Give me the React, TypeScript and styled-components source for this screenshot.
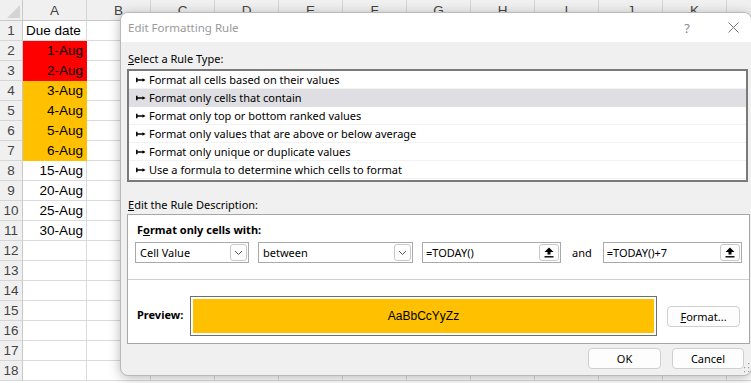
import React from "react";
import styled, { createGlobalStyle } from "styled-components";

const GlobalStyle = createGlobalStyle`
  html, body {
    margin: 0;
    padding: 0;
    width: 751px;
    height: 383px;
    overflow: hidden;
    background: #ffffff;
  }
`;

const UI_FONT = `"Noto Sans", "Open Sans", sans-serif`;
const CELL_FONT = `"Liberation Sans", Arial, sans-serif`;

const Page = styled.div`
  position: relative;
  width: 751px;
  height: 383px;
  overflow: hidden;
`;

/* ---------- spreadsheet ---------- */

const Sheet = styled.div`
  display: grid;
  grid-template-columns: 23px repeat(12, 64px);
  grid-template-rows: 21px repeat(18, 20px);
  font-family: ${CELL_FONT};
`;

const Corner = styled.div`
  position: relative;
  background: #f0f0f0;
  border-right: 1px solid #c8c8c8;
  border-bottom: 1px solid #c8c8c8;
  box-sizing: border-box;
  &::after {
    content: "";
    position: absolute;
    right: 2px;
    bottom: 2px;
    width: 0;
    height: 0;
    border-left: 13px solid transparent;
    border-bottom: 13px solid #d4d4d4;
  }
`;

const ColHead = styled.div`
  background: #f0f0f0;
  border-right: 1px solid #d6d6d6;
  border-bottom: 1px solid #c8c8c8;
  box-sizing: border-box;
  display: flex;
  align-items: center;
  justify-content: center;
  font-size: 13.5px;
  color: #444;
`;

const RowHead = styled.div`
  background: #f0f0f0;
  border-right: 1px solid #c8c8c8;
  border-bottom: 1px solid #d6d6d6;
  box-sizing: border-box;
  display: flex;
  align-items: center;
  justify-content: center;
  font-size: 13.5px;
  color: #444;
`;

const Cell = styled.div<{ $fill?: string; $right?: boolean }>`
  background: ${(p) => p.$fill || "#ffffff"};
  border-right: 1px solid ${(p) => p.$fill || "#dadada"};
  border-bottom: 1px solid ${(p) => p.$fill || "#dadada"};
  box-sizing: border-box;
  display: flex;
  align-items: center;
  justify-content: ${(p) => (p.$right ? "flex-end" : "flex-start")};
  padding: 0 3px;
  font-size: 13.5px;
  color: #000;
  white-space: nowrap;
`;

/* ---------- dialog ---------- */

const Dialog = styled.div`
  position: absolute;
  left: 120px;
  top: 12px;
  width: 632px;
  height: 364px;
  box-sizing: border-box;
  border: 1px solid #b9b9b9;
  border-radius: 8px;
  background: #f0f0f0;
  box-shadow: 0 2px 12px rgba(0, 0, 0, 0.28);
  overflow: hidden;
  display: flex;
  flex-direction: column;
  font-family: ${UI_FONT};
  font-size: 11px;
  color: #000;
`;

const TitleBar = styled.div`
  height: 29px;
  flex: none;
  background: #ffffff;
  display: flex;
  align-items: center;
  padding-left: 7px;
`;

const Title = styled.div`
  flex: 1;
  color: #9a9a9a;
  font-size: 11.5px;
`;

const TitleButton = styled.div<{ $gap?: number }>`
  width: 36px;
  height: 29px;
  margin-right: ${(p) => p.$gap || 0}px;
  display: flex;
  align-items: center;
  justify-content: center;
  color: #8a8a8a;
  font-size: 13px;
`;

const Body = styled.div`
  flex: 1;
  display: flex;
  flex-direction: column;
  padding-left: 6px;
`;

const SectionLabel = styled.div<{ $top: number }>`
  margin-top: ${(p) => p.$top}px;
  height: 16px;
  line-height: 16px;
  padding-left: 1px;
`;

const RuleList = styled.div`
  margin-top: 2px;
  width: 621px;
  height: 113px;
  box-sizing: border-box;
  border: 2px solid #7a7a7a;
  background: #ffffff;
  display: flex;
  flex-direction: column;
`;

const RuleItem = styled.div<{ $selected?: boolean }>`
  height: 18px;
  flex: none;
  box-sizing: border-box;
  display: flex;
  align-items: center;
  gap: 3px;
  padding-left: 7px;
  background: ${(p) => (p.$selected ? "#dedee3" : "#ffffff")};
  border-bottom: 1px solid ${(p) => (p.$selected ? "#dedee3" : "#f2f2f2")};
  white-space: nowrap;
`;

const RuleBox = styled.div`
  margin-top: 1px;
  width: 623px;
  height: 130px;
  box-sizing: border-box;
  border: 1px solid #a6a6a6;
  background: #ffffff;
  display: flex;
  flex-direction: column;
`;

const BoldLabel = styled.div`
  font-weight: 700;
  white-space: nowrap;
`;

const CriteriaHead = styled(BoldLabel)`
  margin: 7px 0 0 9px;
  height: 16px;
  line-height: 16px;
`;

const CriteriaRow = styled.div`
  margin: 4px 0 0 7px;
  height: 21px;
  display: flex;
  align-items: center;
`;

const Select = styled.div<{ $w: number }>`
  width: ${(p) => p.$w}px;
  height: 21px;
  box-sizing: border-box;
  border: 1px solid #a9a9a9;
  background: #ffffff;
  display: flex;
  align-items: center;
  justify-content: space-between;
  padding: 0 1px 0 4px;
  margin-right: 9px;
`;

const TextInput = styled(Select)`
  padding-left: 3px;
  margin-right: 0;
`;

const SmallBtn = styled.div<{ $w: number }>`
  width: ${(p) => p.$w}px;
  height: 17px;
  box-sizing: border-box;
  border: 1px solid #c9c9c9;
  border-radius: 3px;
  background: #fdfdfd;
  display: flex;
  align-items: center;
  justify-content: center;
`;

const AndLabel = styled.div`
  margin: 0 11px;
`;

const Divider = styled.div`
  margin-top: 16px;
  height: 1px;
  background: #d0d0d0;
`;

const PreviewRow = styled.div`
  margin-top: 16px;
  display: flex;
  align-items: center;
  padding-left: 9px;
`;

const PreviewLabel = styled(BoldLabel)`
  width: 53px;
  margin-top: -3px;
`;

const PreviewFrame = styled.div`
  width: 467px;
  height: 40px;
  box-sizing: border-box;
  border: 1px solid #6e6e6e;
  padding: 2px;
  background: #ffffff;
`;

const PreviewFill = styled.div`
  height: 100%;
  background: #ffc000;
  display: flex;
  align-items: center;
  justify-content: center;
  font-family: ${CELL_FONT};
  font-size: 12px;
  color: #000;
`;

const Button = styled.div<{ $w: number; $gap?: number }>`
  width: ${(p) => p.$w}px;
  height: 21px;
  margin-left: ${(p) => p.$gap || 0}px;
  box-sizing: border-box;
  border: 1px solid #cfcfcf;
  border-radius: 4px;
  background: #fdfdfd;
  display: flex;
  align-items: center;
  justify-content: center;
`;

const Footer = styled.div`
  margin-top: 4px;
  display: flex;
  justify-content: flex-end;
  padding-right: 7px;
`;

const Grip = styled.svg`
  position: absolute;
  right: 1px;
  bottom: 2px;
`;

/* ---------- icons ---------- */

const RuleArrow = () => (
  <svg width="10" height="8" viewBox="0 0 10 8">
    <path d="M0.8 1.8 V6.2" stroke="#000" strokeWidth="1.5" />
    <path d="M1 4 H7.5" stroke="#000" strokeWidth="1.6" />
    <path d="M6.5 2.2 L9.6 4 L6.5 5.8 Z" fill="#000" />
  </svg>
);

const Chevron = () => (
  <svg width="9" height="6" viewBox="0 0 9 6">
    <path d="M1 1 L4.5 4.5 L8 1" fill="none" stroke="#555" strokeWidth="1" />
  </svg>
);

const Collapse = () => (
  <svg width="10" height="11" viewBox="0 0 10 11">
    <path d="M5 0.5 L9.5 5 H6.5 V7.5 H3.5 V5 H0.5 Z" fill="#000" />
    <path d="M0.5 9.8 H9.5" stroke="#000" strokeWidth="1.4" />
  </svg>
);

const CloseX = () => (
  <svg width="11" height="11" viewBox="0 0 11 11">
    <path d="M0.5 0.5 L10.5 10.5 M10.5 0.5 L0.5 10.5" stroke="#777" strokeWidth="1" />
  </svg>
);

/* ---------- data ---------- */

// the last column runs off the window, so its letter is not drawn
const columns = ["A", "B", "C", "D", "E", "F", "G", "H", "I", "J", "K", ""];
const dates = ["1-Aug", "2-Aug", "3-Aug", "4-Aug", "5-Aug", "6-Aug", "15-Aug", "20-Aug", "25-Aug", "30-Aug"];
const fillFor = (i: number) => (i < 2 ? "#ff0000" : i < 6 ? "#ffc000" : undefined);

const ruleTypes = [
  "Format all cells based on their values",
  "Format only cells that contain",
  "Format only top or bottom ranked values",
  "Format only values that are above or below average",
  "Format only unique or duplicate values",
  "Use a formula to determine which cells to format",
];

export default function App() {
  const rows = Array.from({ length: 18 }, (_, i) => i + 1);

  return (
    <Page>
      <GlobalStyle />
      <Sheet>
        <Corner />
        {columns.map((c, ci) => (
          <ColHead key={ci}>{c}</ColHead>
        ))}
        {rows.map((r) => (
          <React.Fragment key={r}>
            <RowHead>{r}</RowHead>
            {columns.map((c, ci) => {
              if (ci === 0 && r === 1) return <Cell key={ci}>Due date</Cell>;
              if (ci === 0 && r >= 2 && r <= 11) {
                const i = r - 2;
                return (
                  <Cell key={ci} $right $fill={fillFor(i)}>
                    {dates[i]}
                  </Cell>
                );
              }
              return <Cell key={ci} />;
            })}
          </React.Fragment>
        ))}
      </Sheet>

      <Dialog>
        <TitleBar>
          <Title>Edit Formatting Rule</Title>
          <TitleButton $gap={10}>?</TitleButton>
          <TitleButton>
            <CloseX />
          </TitleButton>
        </TitleBar>
        <Body>
          <SectionLabel $top={9}>
            <u>S</u>elect a Rule Type:
          </SectionLabel>
          <RuleList>
            {ruleTypes.map((t, i) => (
              <RuleItem key={t} $selected={i === 1}>
                <RuleArrow />
                {t}
              </RuleItem>
            ))}
          </RuleList>

          <SectionLabel $top={15}>
            <u>E</u>dit the Rule Description:
          </SectionLabel>
          <RuleBox>
            <CriteriaHead>
              F<u>o</u>rmat only cells with:
            </CriteriaHead>
            <CriteriaRow>
              <Select $w={114}>
                Cell Value
                <SmallBtn $w={17}>
                  <Chevron />
                </SmallBtn>
              </Select>
              <Select $w={155}>
                between
                <SmallBtn $w={17}>
                  <Chevron />
                </SmallBtn>
              </Select>
              <TextInput $w={139}>
                =TODAY()
                <SmallBtn $w={20}>
                  <Collapse />
                </SmallBtn>
              </TextInput>
              <AndLabel>and</AndLabel>
              <TextInput $w={139}>
                =TODAY()+7
                <SmallBtn $w={20}>
                  <Collapse />
                </SmallBtn>
              </TextInput>
            </CriteriaRow>
            <Divider />
            <PreviewRow>
              <PreviewLabel>Preview:</PreviewLabel>
              <PreviewFrame>
                <PreviewFill>AaBbCcYyZz</PreviewFill>
              </PreviewFrame>
              <Button $w={73} $gap={10}>
                <span>
                  <u>F</u>ormat...
                </span>
              </Button>
            </PreviewRow>
          </RuleBox>
          <Footer>
            <Button $w={73}>OK</Button>
            <Button $w={72} $gap={11}>
              Cancel
            </Button>
          </Footer>
        </Body>
        <Grip width="6" height="10" viewBox="0 0 6 10">
          <rect x="4" y="0" width="1.2" height="1.2" fill="#9a9a9a" />
          <rect x="4" y="4" width="1.2" height="1.2" fill="#9a9a9a" />
          <rect x="0" y="4" width="1.2" height="1.2" fill="#9a9a9a" />
          <rect x="4" y="8" width="1.2" height="1.2" fill="#9a9a9a" />
          <rect x="0" y="8" width="1.2" height="1.2" fill="#9a9a9a" />
        </Grip>
      </Dialog>
    </Page>
  );
}
